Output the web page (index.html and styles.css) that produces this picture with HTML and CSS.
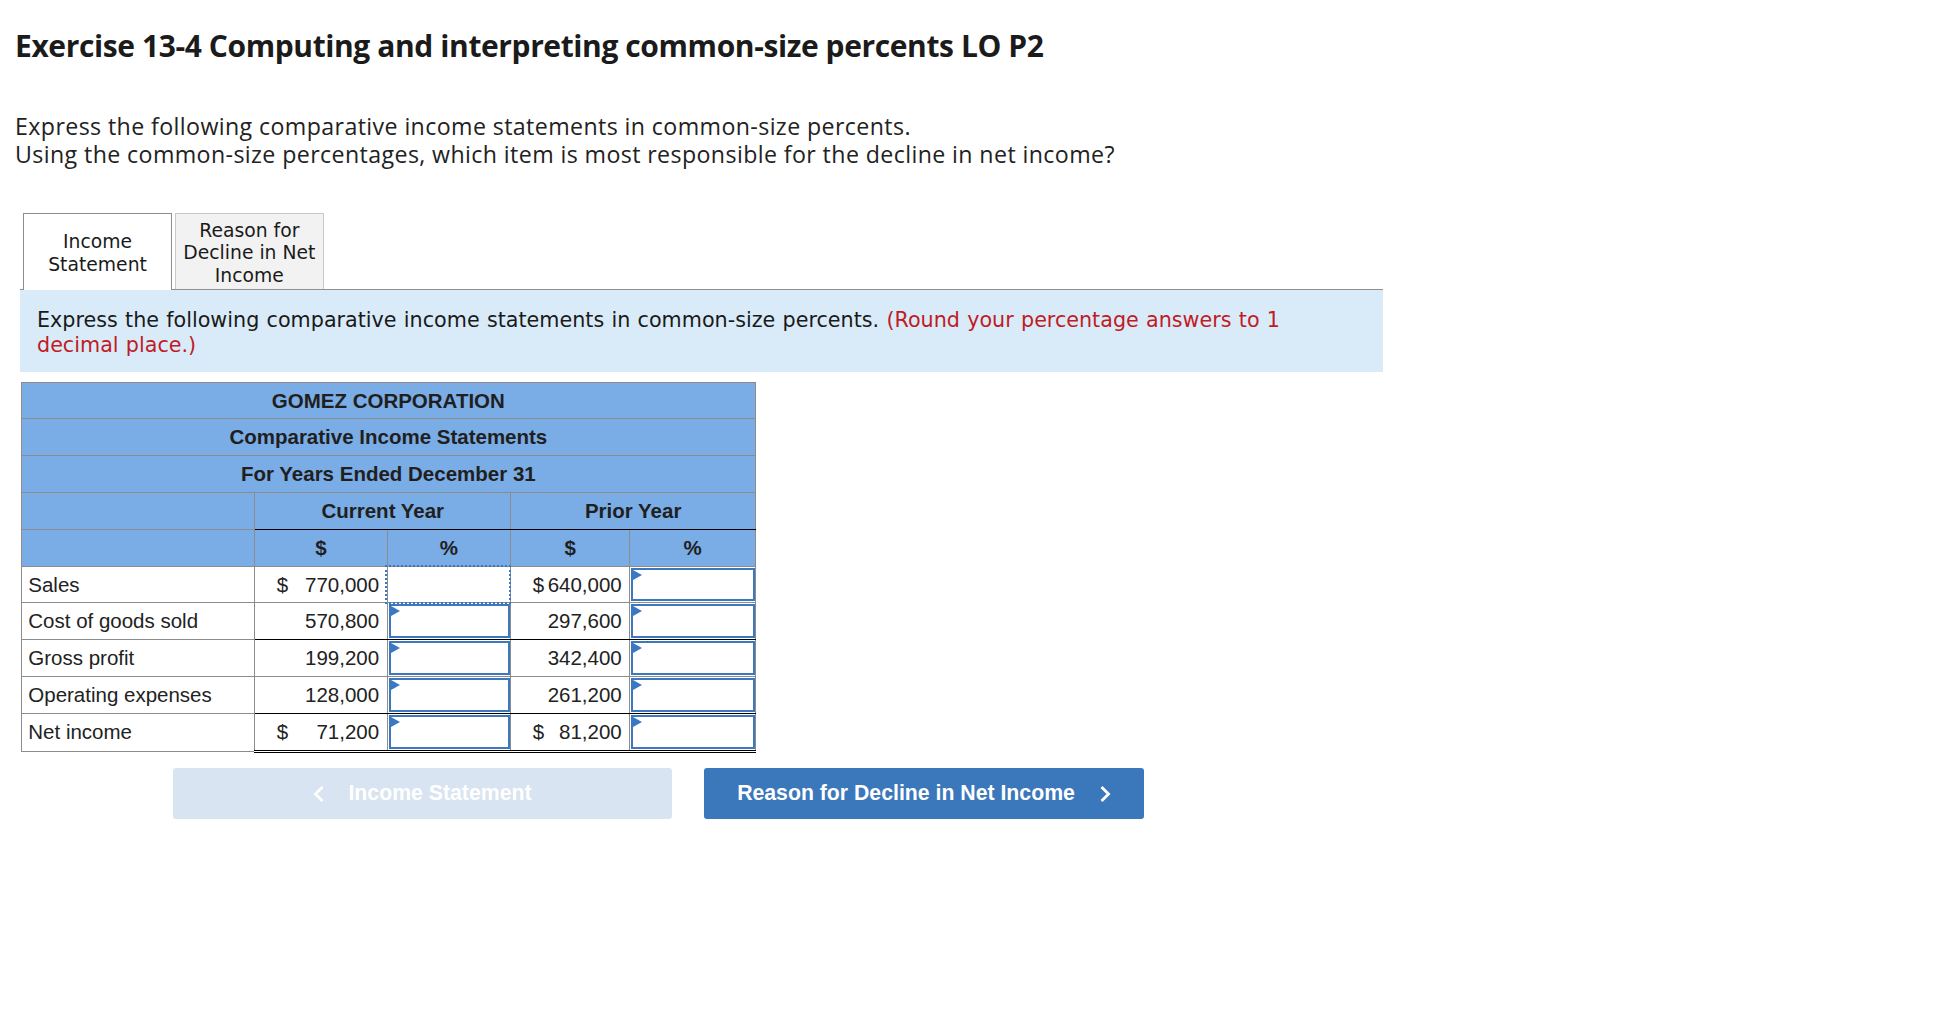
FILE: index.html
```html
<!DOCTYPE html>
<html lang="en">
<head>
<meta charset="utf-8">
<title>Exercise 13-4</title>
<link rel="stylesheet" href="styles.css">
</head>
<body>
<div class="page">
  <h1 class="title">Exercise 13-4 Computing and interpreting common-size percents LO P2</h1>
  <div class="intro">
    <p>Express the following comparative income statements in common-size percents.</p>
    <p>Using the common-size percentages, which item is most responsible for the decline in net income?</p>
  </div>

  <div class="exercise">
    <div class="tabs">
      <div class="tab active">Income<br>Statement</div>
      <div class="tab">Reason for<br>Decline in Net<br>Income</div>
    </div>
    <div class="panel">
      Express the following comparative income statements in common-size percents. <span class="hint">(Round your percentage answers to 1 decimal place.)</span>
    </div>

    <table class="stmt">
      <colgroup>
        <col class="c-label"><col class="c-amt1"><col class="c-pct1"><col class="c-amt2"><col class="c-pct2">
      </colgroup>
      <tr class="hd"><th colspan="5">GOMEZ CORPORATION</th></tr>
      <tr class="hd"><th colspan="5">Comparative Income Statements</th></tr>
      <tr class="hd"><th colspan="5">For Years Ended December 31</th></tr>
      <tr class="hd"><th class="blank"></th><th colspan="2" class="bk">Current Year</th><th colspan="2" class="bk">Prior Year</th></tr>
      <tr class="hd"><th class="blank"></th><th>$</th><th>%</th><th>$</th><th>%</th></tr>
      <tr>
        <td class="lbl">Sales</td>
        <td class="amt"><div class="amt-in"><span>$</span><span>770,000</span></div></td>
        <td class="pct"><div class="fld"><div class="focus"></div></div></td>
        <td class="amt"><div class="amt-in"><span>$</span><span>640,000</span></div></td>
        <td class="pct"><div class="fld"><input class="box" type="text"><i class="flag"></i></div></td>
      </tr>
      <tr class="sub">
        <td class="lbl">Cost of goods sold</td>
        <td class="amt"><div class="amt-in"><span></span><span>570,800</span></div></td>
        <td class="pct"><div class="fld"><input class="box" type="text"><i class="flag"></i></div></td>
        <td class="amt"><div class="amt-in"><span></span><span>297,600</span></div></td>
        <td class="pct"><div class="fld"><input class="box" type="text"><i class="flag"></i></div></td>
      </tr>
      <tr>
        <td class="lbl">Gross profit</td>
        <td class="amt"><div class="amt-in"><span></span><span>199,200</span></div></td>
        <td class="pct"><div class="fld"><input class="box" type="text"><i class="flag"></i></div></td>
        <td class="amt"><div class="amt-in"><span></span><span>342,400</span></div></td>
        <td class="pct"><div class="fld"><input class="box" type="text"><i class="flag"></i></div></td>
      </tr>
      <tr class="sub">
        <td class="lbl">Operating expenses</td>
        <td class="amt"><div class="amt-in"><span></span><span>128,000</span></div></td>
        <td class="pct"><div class="fld"><input class="box" type="text"><i class="flag"></i></div></td>
        <td class="amt"><div class="amt-in"><span></span><span>261,200</span></div></td>
        <td class="pct"><div class="fld"><input class="box" type="text"><i class="flag"></i></div></td>
      </tr>
      <tr class="total">
        <td class="lbl">Net income</td>
        <td class="amt"><div class="amt-in"><span>$</span><span>71,200</span></div></td>
        <td class="pct"><div class="fld"><input class="box" type="text"><i class="flag"></i></div></td>
        <td class="amt"><div class="amt-in"><span>$</span><span>81,200</span></div></td>
        <td class="pct"><div class="fld"><input class="box" type="text"><i class="flag"></i></div></td>
      </tr>
    </table>

    <div class="nav">
      <button class="btn prev" type="button">
        <svg class="chev" viewBox="0 0 11 16" width="11" height="16"><polyline points="8.5,2 2.5,8 8.5,14"/></svg>
        <span>Income Statement</span>
      </button>
      <button class="btn next" type="button">
        <span>Reason for Decline in Net Income</span>
        <svg class="chev" viewBox="0 0 11 16" width="11" height="16"><polyline points="2.5,2 8.5,8 2.5,14"/></svg>
      </button>
    </div>
  </div>
</div>
</body>
</html>
```

FILE: styles.css
```css
html, body {
  margin: 0;
  padding: 0;
  background: #ffffff;
}

.page {
  padding: 28px 0 0 15px;
}

.title {
  margin: 0;
  font-family: "Open Sans", Lato, sans-serif;
  font-weight: 700;
  font-size: 30px;
  line-height: 36px;
  letter-spacing: -0.4px;
  color: #1b1b1b;
}

.intro {
  margin-top: 48px;
  font-family: "Open Sans", Lato, sans-serif;
  font-size: 23.2px;
  line-height: 28px;
  letter-spacing: 0.39px;
  color: #222222;
}

.intro p {
  margin: 0;
}

.exercise {
  margin-top: 45px;
  margin-left: 5px;
}

.tabs {
  display: flex;
  align-items: flex-start;
  gap: 3.3px;
  padding-left: 3.3px;
  position: relative;
  z-index: 1;
}

.tab {
  box-sizing: border-box;
  width: 148.5px;
  height: 76px;
  display: flex;
  align-items: center;
  justify-content: center;
  text-align: center;
  font-family: "DejaVu Sans", Verdana, sans-serif;
  font-size: 18.75px;
  line-height: 22.5px;
  color: #1a1a1a;
  background: #f2f2f2;
  border: 1px solid #c8c8c8;
  border-bottom: none;
  padding-top: 4px;
}

.tab.active {
  height: 77px;
  margin-bottom: -1px;
  background: #ffffff;
  border-color: #8c8c8c;
  padding-bottom: 1px;
}

.panel {
  box-sizing: border-box;
  width: 1363px;
  border-top: 1px solid #8f8f8f;
  background: #d9ebf9;
  padding: 18px 40px 14.7px 17px;
  font-family: "DejaVu Sans", Verdana, sans-serif;
  font-size: 20.7px;
  line-height: 24.5px;
  word-spacing: 0.7px;
  color: #1a1a1a;
}

.hint {
  color: #c01b24;
}

.stmt {
  margin-top: 10px;
  margin-left: 0.7px;
  border-collapse: collapse;
  table-layout: fixed;
  width: 734.3px;
  font-family: "Liberation Sans", Arial, sans-serif;
  font-size: 20.5px;
  color: #222222;
  border: 1px solid #8c8c8c;
}

.c-label { width: 233.6px; }
.c-amt1 { width: 132.4px; }
.c-pct1 { width: 123.6px; }
.c-amt2 { width: 119px; }
.c-pct2 { width: 125.7px; }

.stmt tr {
  height: 36.8px;
}

.stmt th,
.stmt td {
  border: 1px solid #8c8c8c;
  padding: 0;
  vertical-align: middle;
}

.stmt th {
  background: #7aace5;
  font-weight: 700;
  text-align: center;
  color: #1f1f1f;
}

.stmt th.bk {
  border-bottom: 1px solid #000000;
}

.lbl {
  padding-left: 6.6px !important;
  text-align: left;
}

.amt-in {
  display: flex;
  justify-content: space-between;
  padding: 0 7.5px 0 21.5px;
}

.stmt td.pct {
  padding: 1px 0 1px 1px;
  background: #ffffff;
}

.fld {
  position: relative;
  height: 33.8px;
}

.box {
  display: block;
  box-sizing: border-box;
  width: 100%;
  height: 100%;
  margin: 0;
  padding: 0 6px;
  border: 2px solid #3c78bd;
  background: #ffffff;
  font: inherit;
  outline: none;
}

.flag {
  position: absolute;
  left: 2px;
  top: 2px;
  width: 0;
  height: 0;
  border-top: 5px solid transparent;
  border-bottom: 5px solid transparent;
  border-left: 9px solid #3a78c4;
}

.focus {
  position: absolute;
  top: -3px;
  left: -3.5px;
  right: -1px;
  bottom: -2.5px;
  border: 2px dotted #3b78c4;
}

.sub td.amt,
.sub td.pct {
  border-bottom: 1px solid #000000;
}

.total td.amt,
.total td.pct {
  border-bottom: 3px double #000000;
}

.nav {
  display: flex;
  gap: 32.3px;
  margin-top: 15px;
  margin-left: 153.3px;
}

.btn {
  box-sizing: border-box;
  height: 51.7px;
  display: flex;
  align-items: center;
  justify-content: center;
  border: none;
  border-radius: 3px;
  padding: 0;
  font-family: "Liberation Sans", Arial, sans-serif;
  font-weight: 700;
  font-size: 21.25px;
  color: #ffffff;
}

.btn.prev {
  width: 498.4px;
  background: #d8e4f1;
  gap: 24px;
}

.btn.next {
  width: 440px;
  background: #3b77bb;
  gap: 25px;
}

.chev {
  display: block;
  fill: none;
  stroke: #ffffff;
  stroke-width: 2.8;
  stroke-linecap: square;
}
```
